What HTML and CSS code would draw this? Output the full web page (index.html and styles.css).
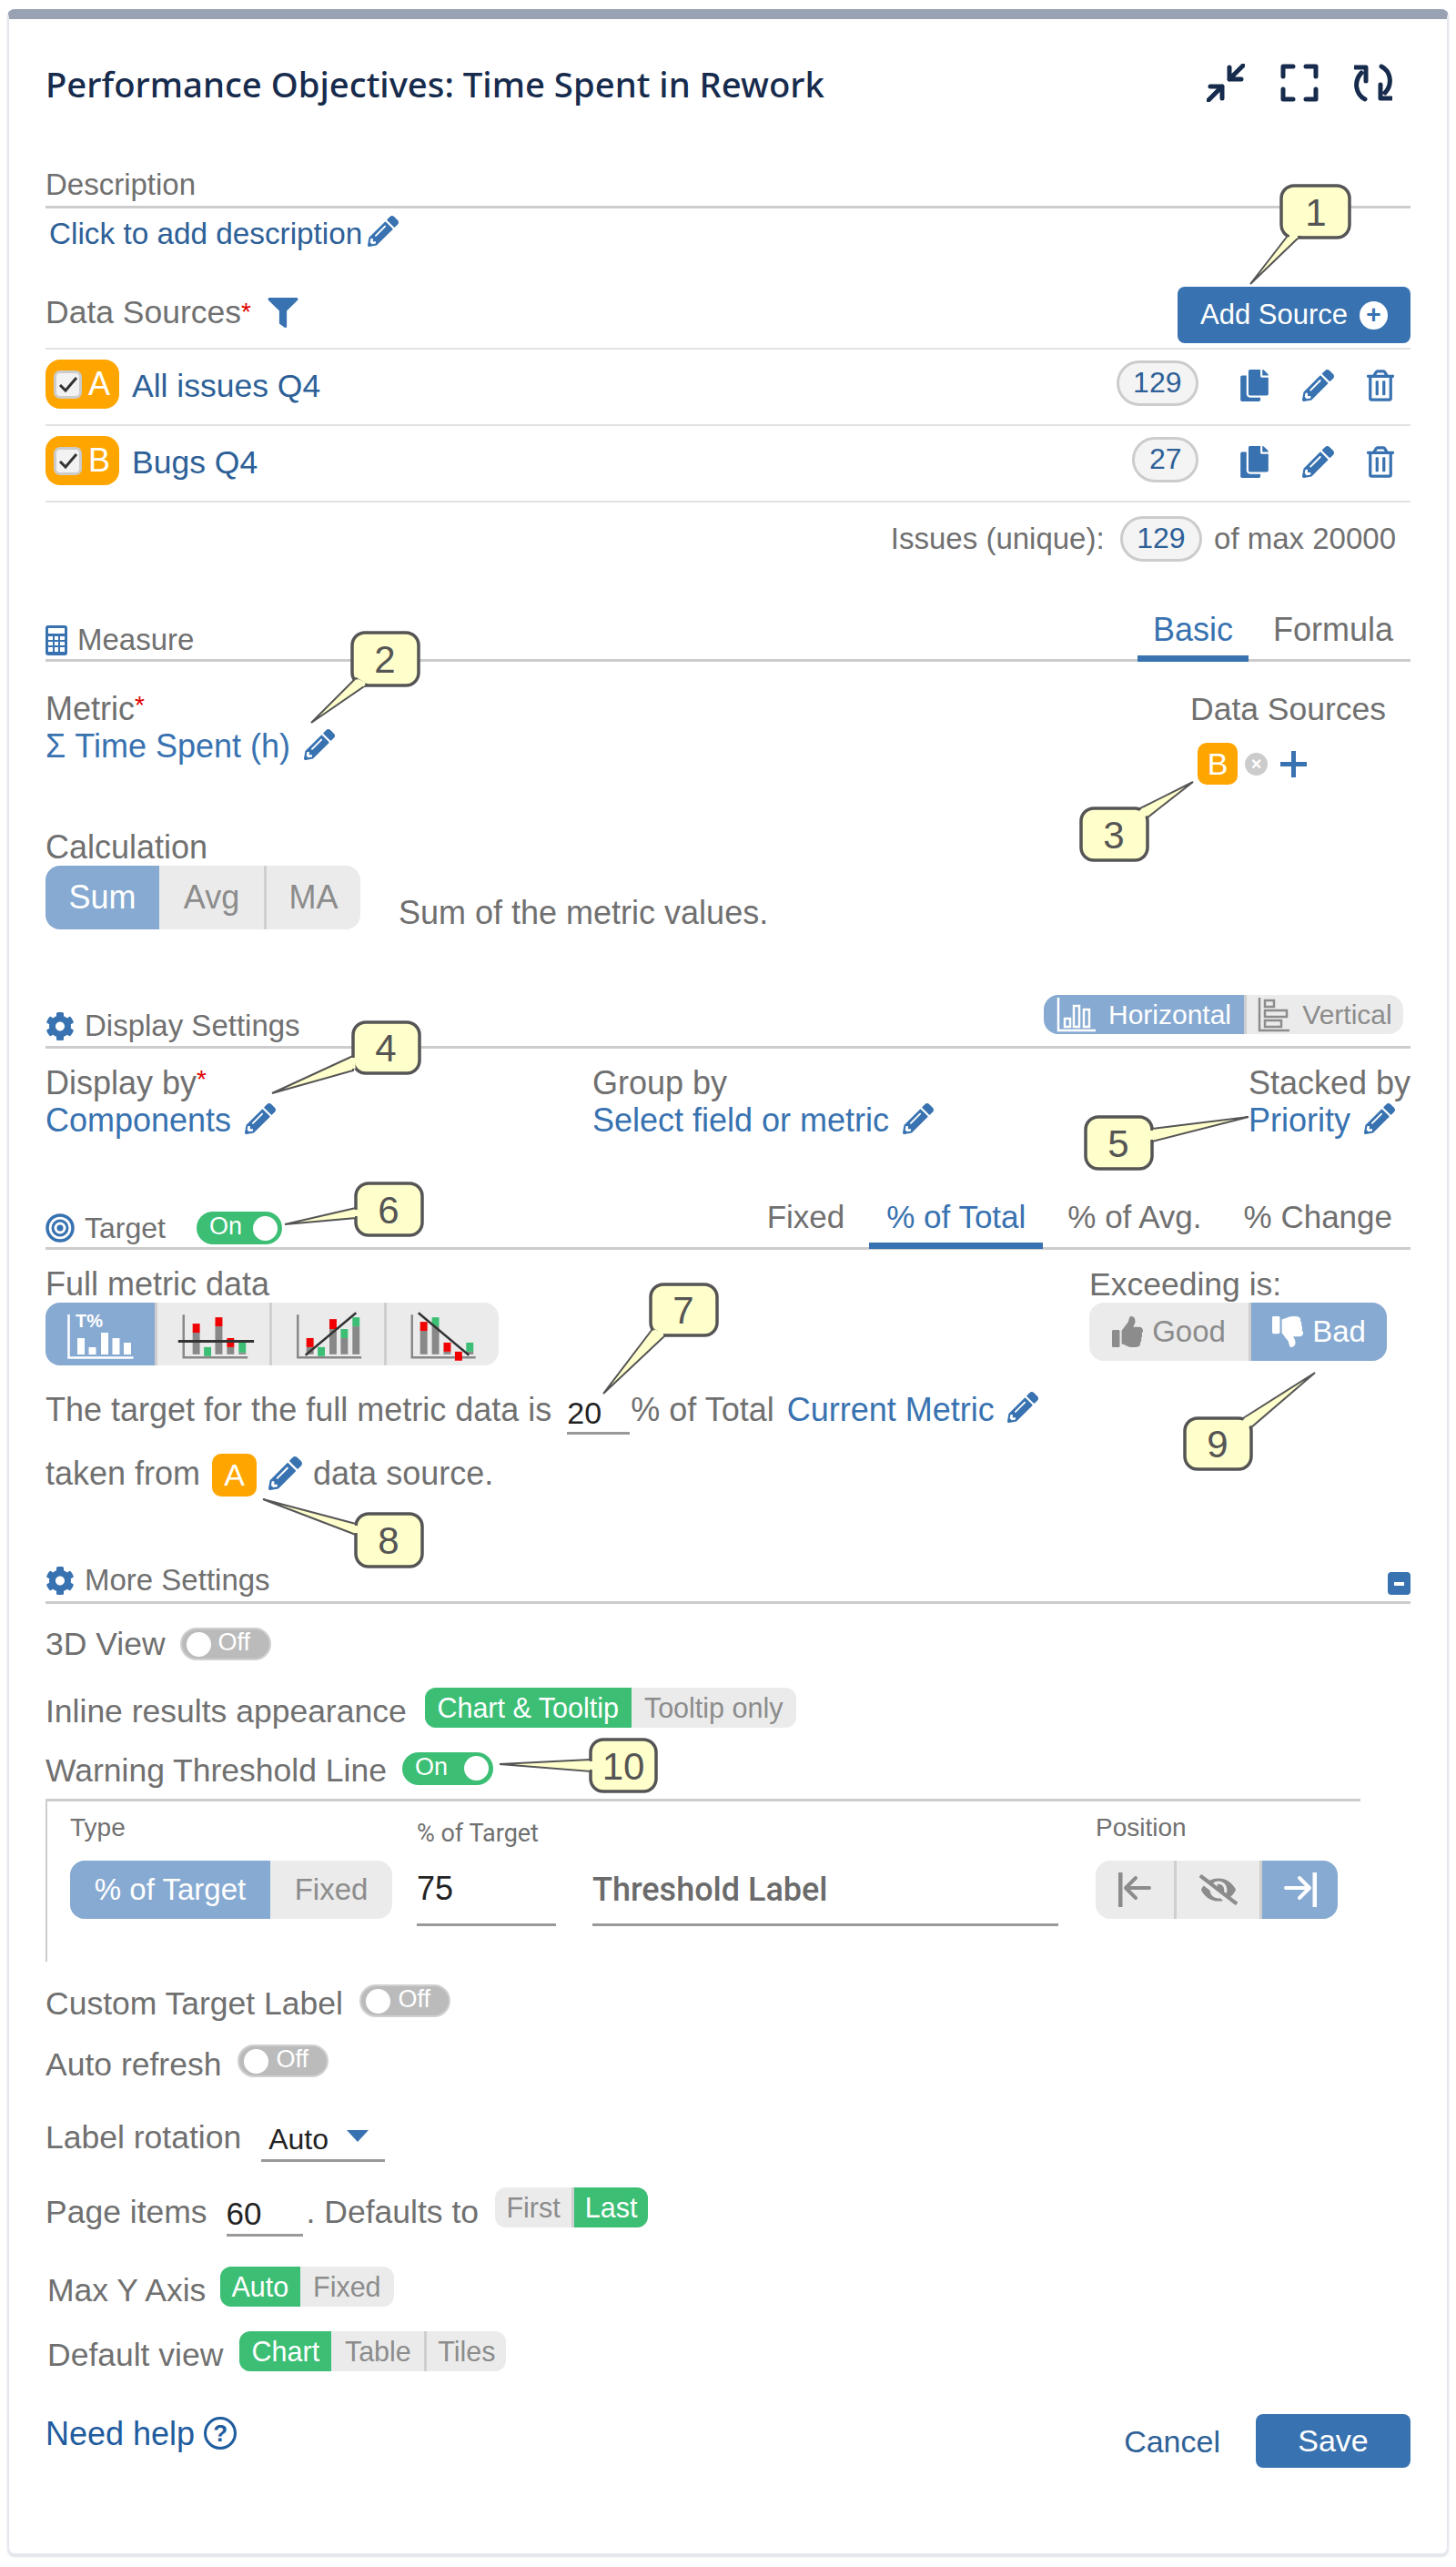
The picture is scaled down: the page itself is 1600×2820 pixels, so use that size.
FILE: index.html
```html
<!DOCTYPE html>
<html lang="en">
<head>
<meta charset="utf-8">
<title>Performance Objectives</title>
<link rel="stylesheet" href="styles.css">
</head>
<body>
<svg class="sprite" aria-hidden="true">
  <symbol id="pencil" viewBox="0 0 512 512"><path d="M497.9 142.1l-46.1 46.1c-4.7 4.7-12.3 4.7-17 0l-111-111c-4.7-4.7-4.7-12.3 0-17l46.1-46.1c18.7-18.7 49.1-18.7 67.9 0l60.1 60.1c18.8 18.7 18.8 49.1 0 67.9zM284.2 99.8L21.6 362.4.4 483.9c-2.9 16.4 11.4 30.6 27.8 27.8l121.5-21.3 262.6-262.6c4.7-4.7 4.7-12.3 0-17l-111-111c-4.8-4.7-12.4-4.7-17.1 0zM124.1 339.9c-5.5-5.5-5.5-14.3 0-19.8l154-154c5.5-5.5 14.3-5.5 19.8 0s5.5 14.3 0 19.8l-154 154c-5.5 5.5-14.3 5.5-19.8 0zM88 424h48v36.3l-64.5 11.3-31.1-31.1L51.7 376H88v48z"/></symbol>
  <symbol id="cog" viewBox="0 0 512 512"><path d="M487.4 315.7l-42.6-24.6c4.3-23.2 4.3-47 0-70.2l42.6-24.6c4.9-2.8 7.1-8.6 5.5-14-11.1-35.6-30-67.8-54.7-94.6-3.8-4.1-10-5.1-14.8-2.3L380.8 110c-17.9-15.4-38.5-27.3-60.8-35.1V25.8c0-5.6-3.9-10.5-9.4-11.7-36.7-8.2-74.3-7.8-109.2 0-5.5 1.2-9.4 6.1-9.4 11.7V75c-22.2 7.9-42.8 19.8-60.8 35.1L88.7 85.5c-4.9-2.8-11-1.9-14.8 2.3-24.7 26.7-43.6 58.9-54.7 94.6-1.7 5.4.6 11.2 5.5 14L67.3 221c-4.3 23.2-4.3 47 0 70.2l-42.6 24.6c-4.9 2.8-7.1 8.6-5.5 14 11.1 35.6 30 67.8 54.7 94.6 3.8 4.1 10 5.1 14.8 2.3l42.6-24.6c17.9 15.4 38.5 27.3 60.8 35.1v49.2c0 5.6 3.9 10.5 9.4 11.7 36.7 8.2 74.3 7.8 109.2 0 5.5-1.2 9.4-6.1 9.4-11.7v-49.2c22.2-7.9 42.8-19.8 60.8-35.1l42.6 24.6c4.9 2.8 11 1.9 14.8-2.3 24.7-26.7 43.6-58.9 54.7-94.6 1.5-5.5-.7-11.3-5.6-14.1zM256 336c-44.1 0-80-35.9-80-80s35.9-80 80-80 80 35.9 80 80-35.9 80-80 80z"/></symbol>
  <symbol id="copy" viewBox="0 0 448 512"><path d="M320 448v40c0 13.255-10.745 24-24 24H24c-13.255 0-24-10.745-24-24V120c0-13.255 10.745-24 24-24h72v296c0 30.879 25.121 56 56 56h168zm0-344V0H152c-13.255 0-24 10.745-24 24v368c0 13.255 10.745 24 24 24h272c13.255 0 24-10.745 24-24V128H344c-13.2 0-24-10.8-24-24zm120.971-31.029L375.029 7.029A24 24 0 0 0 358.059 0H352v96h96v-6.059a24 24 0 0 0-7.029-16.97z"/></symbol>
  <symbol id="trash" viewBox="0 0 448 512"><path d="M268 416h24a12 12 0 0 0 12-12V188a12 12 0 0 0-12-12h-24a12 12 0 0 0-12 12v216a12 12 0 0 0 12 12zM432 80h-82.41l-34-56.7A48 48 0 0 0 274.41 0H173.59a48 48 0 0 0-41.16 23.3L98.41 80H16A16 16 0 0 0 0 96v16a16 16 0 0 0 16 16h16v336a48 48 0 0 0 48 48h288a48 48 0 0 0 48-48V128h16a16 16 0 0 0 16-16V96a16 16 0 0 0-16-16zM171.84 50.91A6 6 0 0 1 177 48h94a6 6 0 0 1 5.15 2.91L293.61 80H154.39zM368 464H80V128h288zm-212-48h24a12 12 0 0 0 12-12V188a12 12 0 0 0-12-12h-24a12 12 0 0 0-12 12v216a12 12 0 0 0 12 12z"/></symbol>
  <symbol id="thumb" viewBox="0 0 512 512"><path d="M104 224H24c-13.255 0-24 10.745-24 24v240c0 13.255 10.745 24 24 24h80c13.255 0 24-10.745 24-24V248c0-13.255-10.745-24-24-24zM384 81.452c0 42.416-25.97 66.208-33.277 94.548h101.723c33.397 0 59.397 27.746 59.553 58.098.084 17.938-7.546 37.249-19.439 49.197l-.11.11c9.836 23.337 8.237 56.037-9.308 79.469 8.681 25.895-.069 57.704-16.382 74.757 4.298 17.598 2.244 32.575-6.148 44.632C440.202 511.587 389.616 512 346.839 512l-2.845-.001c-48.287-.017-87.806-17.598-119.56-31.725-15.957-7.099-36.821-15.887-52.651-16.178-6.54-.12-11.783-5.457-11.783-11.998v-213.77c0-3.2 1.282-6.271 3.558-8.521 39.614-39.144 56.648-80.587 89.117-113.111 14.804-14.832 20.188-37.236 25.393-58.902C282.515 39.293 291.817 0 312 0c24 0 72 8 72 81.452z"/></symbol>
  <symbol id="eyeoff" viewBox="0 0 640 512"><path d="M320 400c-75.85 0-137.25-58.71-142.9-133.11L72.2 185.82c-13.79 17.3-26.48 35.59-36.72 55.59a32.35 32.35 0 0 0 0 29.19C89.71 376.41 197.07 448 320 448c26.91 0 52.87-4 77.89-10.46L346 397.39a144.13 144.13 0 0 1-26 2.61zm313.82 58.1l-110.55-85.44a331.25 331.25 0 0 0 81.25-102.07 32.35 32.35 0 0 0 0-29.19C550.29 135.59 442.93 64 320 64a308.15 308.15 0 0 0-147.32 37.7L45.46 3.37A16 16 0 0 0 23 6.18L3.37 31.45A16 16 0 0 0 6.18 53.9l588.36 454.73a16 16 0 0 0 22.46-2.81l19.64-25.27a16 16 0 0 0-2.82-22.45zm-183.72-142l-39.3-30.38A94.75 94.75 0 0 0 416 256a94.76 94.76 0 0 0-121.31-92.21A47.65 47.65 0 0 1 304 192a46.64 46.64 0 0 1-1.54 10l-73.61-56.89A142.31 142.31 0 0 1 320 112a143.92 143.92 0 0 1 144 144c0 21.63-5.29 41.79-13.9 60.11z"/></symbol>
</svg>

<div class="page">
  <main class="card">
    <header class="head">
      <h1 class="title">Performance Objectives: Time Spent in Rework</h1>
      <div class="head-icons">
        <svg class="hi" width="42" height="42" viewBox="0 0 42 42"><path d="M40 2L25 17M25 4V17H38M2 40L17 25M4 25H17V38"/></svg>
        <svg class="hi" width="42" height="42" viewBox="0 0 42 42"><path d="M3 14V3H14M28 3H39V14M39 28V39H28M14 39H3V28"/></svg>
        <svg class="hi" width="42" height="42" viewBox="0 0 42 42"><path d="M30 3C40 8 43 22 34 32M29 23V38H41M12 39C2 34-1 20 8 10M13 19V4H1"/></svg>
      </div>
    </header>

    <div class="sec-head sec-desc"><span class="sec-title">Description</span></div>
    <div class="add-desc">Click to add description <svg class="ic pencil"><use href="#pencil"/></svg></div>

    <div class="ds-row">
      <div class="ds-label">Data Sources<span class="req">*</span>
        <svg class="ic filter" viewBox="0 0 512 512"><path d="M487.976 0H24.028C2.71 0-8.047 25.866 7.058 40.971L192 225.941V432c0 7.831 3.821 15.17 10.237 19.662l80 55.98C298.02 518.69 320 507.493 320 487.98V225.941l184.947-184.97C520.021 25.896 509.338 0 487.976 0z"/></svg>
      </div>
      <button class="btn add-btn">Add Source <span class="plus-circle">+</span></button>
    </div>

    <ul class="sources">
      <li class="source">
        <span class="chip-check"><span class="check"><svg width="24" height="22" viewBox="0 0 24 22"><path d="M3 12l6 6L21 4"/></svg></span>A</span>
        <span class="source-name">All issues Q4</span>
        <span class="count">129</span>
        <span class="actions">
          <svg class="ic act-copy"><use href="#copy"/></svg>
          <svg class="ic act-pencil"><use href="#pencil"/></svg>
          <svg class="ic act-trash"><use href="#trash"/></svg>
        </span>
      </li>
      <li class="source">
        <span class="chip-check"><span class="check"><svg width="24" height="22" viewBox="0 0 24 22"><path d="M3 12l6 6L21 4"/></svg></span>B</span>
        <span class="source-name">Bugs Q4</span>
        <span class="count">27</span>
        <span class="actions">
          <svg class="ic act-copy"><use href="#copy"/></svg>
          <svg class="ic act-pencil"><use href="#pencil"/></svg>
          <svg class="ic act-trash"><use href="#trash"/></svg>
        </span>
      </li>
    </ul>
    <div class="issues"><span class="issues-lbl">Issues (unique):</span><span class="count">129</span><span>of max 20000</span></div>

    <div class="sec-head sec-measure">
      <span class="sec-title sec-offset">
        <svg class="calc" viewBox="0 0 24 33"><rect width="24" height="33" rx="3" class="calc-bg"/><rect x="3" y="3" width="18" height="6" class="calc-key"/><rect x="3" y="12" width="5" height="4" class="calc-key"/><rect x="10" y="12" width="4" height="4" class="calc-key"/><rect x="16" y="12" width="5" height="4" class="calc-key"/><rect x="3" y="18" width="5" height="4" class="calc-key"/><rect x="10" y="18" width="4" height="4" class="calc-key"/><rect x="16" y="18" width="5" height="4" class="calc-key"/><rect x="3" y="24" width="5" height="5" class="calc-key"/><rect x="10" y="24" width="4" height="5" class="calc-key"/><rect x="16" y="24" width="5" height="5" class="calc-key"/></svg>
        Measure</span>
      <div class="tabs tabs-measure">
        <span class="tab active">Basic</span>
        <span class="tab">Formula</span>
      </div>
    </div>

    <div class="metric-row">
      <div>
        <div class="lbl">Metric<span class="req">*</span></div>
        <div class="val">Σ Time Spent (h) <svg class="ic pencil pen-gap"><use href="#pencil"/></svg></div>
      </div>
      <div class="metric-ds">
        <div class="lbl">Data Sources</div>
        <div class="metric-chips">
          <span class="chip">B</span>
          <span class="x-dot">×</span>
          <svg class="plus" width="29" height="29" viewBox="0 0 29 29"><path d="M14.500 0V29M0 14.500H29"/></svg>
        </div>
      </div>
    </div>

    <div class="lbl calc-lbl">Calculation</div>
    <div class="calc-row">
      <div class="seg seg-lg">
        <span class="cell on">Sum</span><span class="cell">Avg</span><span class="cell">MA</span>
      </div>
      <span class="calc-note">Sum of the metric values.</span>
    </div>

    <div class="sec-head sec-display">
      <span class="sec-title sec-gear"><svg class="ic gear"><use href="#cog"/></svg> Display Settings</span>
      <div class="seg seg-orient">
        <span class="cell on">
          <svg width="44" height="40" viewBox="0 0 44 40" class="svg-white"><path d="M2 1V37H43M9 24h6v9H9zM19 10h6v23h-6zM30 14h6v19h-6z"/></svg>
          Horizontal</span>
        <span class="cell">
          <svg width="36" height="40" viewBox="0 0 36 40" class="svg-grey"><path d="M2 1V37H35M8 4h10v7H8zM8 15h24v7H8zM8 26h18v7H8z"/></svg>
          Vertical</span>
      </div>
    </div>

    <div class="display-grid">
      <div><div class="lbl">Display by<span class="req">*</span></div><div class="val">Components <svg class="ic pencil pen-gap"><use href="#pencil"/></svg></div></div>
      <div><div class="lbl">Group by</div><div class="val">Select field or metric <svg class="ic pencil pen-gap"><use href="#pencil"/></svg></div></div>
      <div><div class="lbl">Stacked by</div><div class="val">Priority <svg class="ic pencil pen-gap"><use href="#pencil"/></svg></div></div>
    </div>

    <div class="sec-head sec-target">
      <span class="sec-title sec-target-title">
        <svg class="target-ic" viewBox="0 0 32 32"><circle cx="16" cy="16" r="14" class="ring"/><circle cx="16" cy="16" r="8" class="ring ring-thin"/><circle cx="16" cy="16" r="3.500" class="dot"/></svg>
        Target
        <span class="toggle on"><span class="t-text">On</span><span class="knob"></span></span>
      </span>
      <div class="tabs tabs-target">
        <span class="tab">Fixed</span>
        <span class="tab active">% of Total</span>
        <span class="tab">% of Avg.</span>
        <span class="tab">% Change</span>
      </div>
    </div>

    <div class="fm-row">
      <div>
        <div class="lbl">Full metric data</div>
        <div class="seg seg-chart">
          <span class="cell on">
            <svg width="120" height="69" viewBox="0 0 120 69"><path d="M25.500 13V60.500H96.500" class="ax-w"/><rect x="35" y="39" width="8" height="18" class="w"/><rect x="47.500" y="49" width="8" height="8" class="w"/><rect x="61" y="33" width="8" height="24" class="w"/><rect x="73.500" y="39" width="8" height="18" class="w"/><rect x="86" y="44" width="8" height="13" class="w"/><text x="33" y="27" class="t-pct">T%</text></svg>
          </span>
          <span class="cell">
            <svg width="124" height="69" viewBox="0 0 124 69"><path d="M29 13V60.500H100" class="ax"/><rect x="39" y="33" width="8" height="24" class="g"/><rect x="39" y="23" width="8" height="10" class="r"/><rect x="51.500" y="49" width="8" height="10" class="gr"/><rect x="64" y="26" width="8" height="31" class="g"/><rect x="64" y="16" width="8" height="10" class="r"/><rect x="77" y="49" width="8" height="8" class="g"/><rect x="77" y="39" width="8" height="10" class="r"/><rect x="90" y="55" width="8" height="2" class="g"/><rect x="90" y="44" width="8" height="11" class="gr"/><path d="M23 42.500H107" class="ln"/></svg>
          </span>
          <span class="cell">
            <svg width="124" height="69" viewBox="0 0 124 69"><path d="M28.500 13V60.500H99" class="ax"/><rect x="38" y="49" width="8" height="8" class="g"/><rect x="38" y="39" width="8" height="10" class="r"/><rect x="50.500" y="49" width="8" height="10" class="gr"/><rect x="63.500" y="29" width="8" height="28" class="g"/><rect x="63.500" y="18" width="8" height="11" class="r"/><rect x="76" y="39" width="8" height="18" class="g"/><rect x="76" y="29" width="8" height="10" class="gr"/><rect x="89" y="26" width="8" height="31" class="g"/><rect x="89" y="16" width="8" height="10" class="gr"/><path d="M37 58L93 11" class="ln ln-thin"/></svg>
          </span>
          <span class="cell">
            <svg width="124" height="69" viewBox="0 0 124 69"><path d="M28 13V60.500H98.500" class="ax"/><rect x="37" y="31" width="8" height="26" class="g"/><rect x="37" y="21" width="8" height="10" class="r"/><rect x="50" y="26" width="8" height="31" class="g"/><rect x="50" y="16" width="8" height="10" class="gr"/><rect x="63" y="54" width="8" height="3" class="g"/><rect x="63" y="44" width="8" height="10" class="r"/><rect x="75.500" y="54" width="8" height="10" class="r"/><rect x="88" y="54" width="8" height="3" class="g"/><rect x="88" y="44" width="8" height="10" class="gr"/><path d="M35 11L91 58" class="ln ln-thin"/></svg>
          </span>
        </div>
      </div>
      <div class="exceed">
        <div class="lbl">Exceeding is:</div>
        <div class="seg seg-exceed">
          <span class="cell"><svg class="ic thumb"><use href="#thumb"/></svg> Good</span>
          <span class="cell on"><svg class="ic thumb thumb-down"><use href="#thumb"/></svg> Bad</span>
        </div>
      </div>
    </div>

    <div class="sentence sentence-1">
      <span>The target for the full metric data is</span>
      <span class="field field-20">20</span>
      <span>% of Total</span>
      <span class="link link-metric">Current Metric</span>
      <svg class="ic pencil pen-metric"><use href="#pencil"/></svg>
    </div>
    <div class="sentence sentence-2">
      <span class="s2-text">taken from</span>
      <span class="chip chip-a">A</span>
      <svg class="ic pencil pen-a"><use href="#pencil"/></svg>
      <span class="s2-text">data source.</span>
    </div>

    <div class="sec-head sec-more">
      <span class="sec-title sec-gear-more"><svg class="ic gear"><use href="#cog"/></svg> More Settings</span>
      <span class="minus"><span class="minus-bar"></span></span>
    </div>

    <div class="opt opt-3d"><span class="opt-label">3D View</span><span class="toggle off"><span class="knob"></span><span class="t-text">Off</span></span></div>
    <div class="opt opt-inline"><span class="opt-label low">Inline results appearance</span>
      <div class="seg seg-sm seg-inline"><span class="cell ok">Chart &amp; Tooltip</span><span class="cell">Tooltip only</span></div>
    </div>
    <div class="opt opt-warn"><span class="opt-label low-s">Warning Threshold Line</span><span class="toggle on"><span class="t-text">On</span><span class="knob"></span></span></div>

    <section class="thresh">
      <div class="t-col t-type">
        <div class="t-label">Type</div>
        <div class="seg seg-type"><span class="cell on">% of Target</span><span class="cell">Fixed</span></div>
      </div>
      <div class="t-col t-pct-col">
        <div class="t-label t-label-rb">% of Target</div>
        <div class="t-input t-input-num">75</div>
      </div>
      <div class="t-col t-text-col">
        <div class="t-label"></div>
        <div class="t-input t-input-text">Threshold Label</div>
      </div>
      <div class="t-col t-pos">
        <div class="t-label">Position</div>
        <div class="seg seg-pos">
          <span class="cell"><svg width="36" height="38" viewBox="0 0 36 38" class="pos-g"><path d="M2 0V38" class="pos-bar"/><path d="M34 17H8M19 6L8 17L19 28"/></svg></span>
          <span class="cell"><svg class="ic eye"><use href="#eyeoff"/></svg></span>
          <span class="cell on"><svg width="36" height="38" viewBox="0 0 36 38" class="pos-w"><path d="M34 0V38" class="pos-bar"/><path d="M2 17H28M17 6L28 17L17 28"/></svg></span>
        </div>
      </div>
    </section>

    <div class="opt opt-custom"><span class="opt-label low-s">Custom Target Label</span><span class="toggle off"><span class="knob"></span><span class="t-text">Off</span></span></div>
    <div class="opt opt-auto"><span class="opt-label low">Auto refresh</span><span class="toggle off"><span class="knob"></span><span class="t-text">Off</span></span></div>

    <div class="inline-row rot-row">
      <span>Label rotation</span>
      <span class="select"><span class="select-val">Auto</span><span class="caret"></span></span>
    </div>
    <div class="inline-row page-row">
      <span class="ptext">Page items</span>
      <span class="field field-60">60</span>
      <span class="ptext ptext-def">. Defaults to</span>
      <div class="seg seg-sm seg-def"><span class="cell">First</span><span class="cell ok">Last</span></div>
    </div>
    <div class="opt opt-max"><span class="opt-label low ind">Max Y Axis</span>
      <div class="seg seg-sm seg-max"><span class="cell ok">Auto</span><span class="cell">Fixed</span></div>
    </div>
    <div class="opt opt-view"><span class="opt-label low ind">Default view</span>
      <div class="seg seg-sm seg-view"><span class="cell ok">Chart</span><span class="cell">Table</span><span class="cell">Tiles</span></div>
    </div>

    <footer class="foot">
      <span class="help">Need help <span class="help-q">?</span></span>
      <span class="foot-right">
        <span class="cancel">Cancel</span>
        <button class="btn save">Save</button>
      </span>
    </footer>
  </main>

  <svg class="callouts" viewBox="0 0 1600 2820">
    <g><rect x="1408" y="204" width="75" height="57" rx="14"/><polygon points="1415,259 1374,312 1428,260"/><line x1="1417" y1="259" x2="1426" y2="259"/><text x="1446" y="248">1</text></g>
    <g><rect x="387" y="695" width="73" height="58" rx="14"/><polygon points="391,745 342,794 403,752"/><line x1="392" y1="748" x2="401" y2="752"/><text x="423" y="739">2</text></g>
    <g><rect x="1188" y="888" width="73" height="57" rx="14"/><polygon points="1253,888 1311,859 1261,898"/><line x1="1254" y1="889" x2="1260" y2="896"/><text x="1224" y="932">3</text></g>
    <g><rect x="388" y="1123" width="73" height="56" rx="14"/><polygon points="388,1160 299,1201 388,1176"/><line x1="388" y1="1162" x2="388" y2="1174"/><text x="424" y="1166">4</text></g>
    <g><rect x="1193" y="1227" width="73" height="57" rx="14"/><polygon points="1266,1240 1372,1227 1266,1254"/><line x1="1266" y1="1242" x2="1266" y2="1252"/><text x="1229" y="1271">5</text></g>
    <g><rect x="391" y="1300" width="73" height="57" rx="14"/><polygon points="391,1327 313,1345 391,1338"/><line x1="391" y1="1329" x2="391" y2="1336"/><text x="427" y="1344">6</text></g>
    <g><rect x="715" y="1411" width="73" height="56" rx="14"/><polygon points="717,1460 663,1531 731,1467"/><line x1="718" y1="1463" x2="729" y2="1466"/><text x="751" y="1454">7</text></g>
    <g><rect x="391" y="1663" width="73" height="58" rx="14"/><polygon points="391,1674 289,1647 391,1686"/><line x1="391" y1="1676" x2="391" y2="1684"/><text x="427" y="1707">8</text></g>
    <g><rect x="1302" y="1558" width="73" height="56" rx="14"/><polygon points="1366,1558 1445,1508 1375,1568"/><line x1="1367" y1="1559" x2="1374" y2="1566"/><text x="1338" y="1601">9</text></g>
    <g><rect x="649" y="1911" width="72" height="57" rx="14"/><polygon points="649,1933 549,1938 649,1946"/><line x1="649" y1="1935" x2="649" y2="1944"/><text x="685" y="1955">10</text></g>
  </svg>
</div>
</body>
</html>
```
FILE: styles.css
```css
* { box-sizing: border-box; }
html, body { margin: 0; padding: 0; background: #fff; }
body { font-family: "Liberation Sans", Arial, sans-serif; font-size: 36px; color: #707070; line-height: 40px; }
ul { list-style: none; margin: 0; padding: 0; }
button { font-family: inherit; border: 0; cursor: pointer; }
.sprite { position: absolute; width: 0; height: 0; overflow: hidden; }
.page { position: relative; width: 1600px; height: 2820px; overflow: hidden; padding-top: 10px; }
.card { margin-left: 8px; width: 1584px; height: 2797px; background: #fff; border: 2px solid #e5e7ee; border-top: 11px solid #98a2b3; border-radius: 8px; padding: 0 40px; box-shadow: 0 2px 2px rgba(90,100,130,.18); }
.ic { fill: currentColor; display: inline-block; }
.req { color: #e00000; font-size: 28px; vertical-align: 7px; line-height: 0; }

.head { margin-top: 40px; height: 62px; display: flex; justify-content: space-between; align-items: center; }
.title { margin: 0; font-family: "Noto Sans", sans-serif; font-weight: 500; font-size: 38.300px; line-height: 62px; color: #172b4d; white-space: nowrap; }
.head-icons { display: flex; gap: 39px; margin-right: 20px; margin-top: -2px; }
.hi { fill: none; stroke: #172b4d; stroke-width: 5; stroke-linecap: round; stroke-linejoin: round; }

.sec-head { border-bottom: 3px solid #ccc; display: flex; justify-content: space-between; align-items: flex-start; }
.sec-title { font-size: 33px; line-height: 40px; display: flex; align-items: center; }
.sec-desc { margin-top: 60px; height: 46px; }
.add-desc { margin-top: 8px; height: 40px; padding-left: 4px; color: #2d6097; font-size: 33.300px; display: flex; align-items: center; gap: 6px; }
.pencil { width: 34px; height: 34px; color: #3872b0; }
.add-desc .pencil { margin-top: -6px; }

.ds-row { margin-top: 38px; height: 62px; display: flex; justify-content: space-between; align-items: flex-start; }
.ds-label { display: flex; align-items: center; margin-top: 8px; height: 40px; font-size: 35.500px; }
.filter { width: 36px; height: 33px; color: #3872b0; margin-left: 17px; }
.btn { background: #3872b0; color: #fff; border-radius: 8px; }
.add-btn { width: 256px; height: 62px; font-size: 31px; display: flex; align-items: center; justify-content: center; gap: 13px; }
.plus-circle { width: 31px; height: 31px; border-radius: 50%; background: #fff; color: #3872b0; font-size: 28px; line-height: 30px; font-weight: 700; text-align: center; }

.sources { margin-top: 5px; border-top: 2px solid #e2e2e2; }
.source { height: 84px; border-bottom: 2px solid #e2e2e2; display: flex; align-items: center; padding-bottom: 6px; }
.chip-check { width: 81px; height: 54px; background: #ffa500; border-radius: 16px; color: #fff; display: flex; align-items: center; padding-left: 9px; gap: 7px; font-size: 36px; }
.check { width: 31px; height: 31px; background: #f2f2f2; border: 3px solid #ccc; border-radius: 7px; display: flex; align-items: center; justify-content: center; }
.check svg { fill: none; stroke: #333; stroke-width: 3; flex: none; }
.source-name { margin-left: 14px; color: #2d6097; flex: 1; margin-top: 4px; font-size: 35.500px; }
.count { display: inline-block; height: 50px; padding: 0 15.500px; border: 3px solid #ccc; border-radius: 25px; background: #f4f4f4; color: #2d6097; font-size: 32px; line-height: 43px; }
.source .count { margin-top: -3px; }
.actions { margin-left: 44px; margin-right: 18px; display: flex; align-items: center; gap: 35px; margin-top: 2px; }
.act-copy { width: 35px; height: 35px; color: #3872b0; }
.act-pencil { width: 35px; height: 35px; color: #3872b0; }
.act-trash { width: 30px; height: 35px; color: #3872b0; margin-left: 1px; }
.issues { margin-top: 15px; height: 50px; display: flex; align-items: center; justify-content: flex-end; gap: 13px; padding-right: 16px; font-size: 33px; }
.issues-lbl { margin-right: 4px; }

.sec-measure { margin-top: 54px; height: 56px; }
.sec-offset { margin-top: 12px; gap: 11px; }
.calc { width: 24px; height: 33px; }
.calc-bg { fill: #3872b0; }
.calc-key { fill: #fff; }
.tabs { display: flex; }
.tab { display: block; margin-bottom: -3px; padding-top: 1px; border-bottom: 7px solid transparent; height: 56px; }
.tab.active { color: #3872b0; border-bottom-color: #3872b0; }
.tabs-measure { gap: 10px; margin-right: 2px; }
.tabs-measure .tab { padding-left: 17px; padding-right: 17px; }
.tabs-target { gap: 8px; margin-right: 1px; font-size: 35px; }
.tabs-target .tab { padding-left: 19px; padding-right: 19px; }

.lbl { height: 40px; font-size: 36px; white-space: nowrap; }
.metric-row .lbl, .display-grid .lbl { line-height: 38px; }
.val { height: 40px; color: #3872b0; font-size: 36px; display: flex; align-items: center; white-space: nowrap; }
.pen-gap { margin-left: 15px; margin-top: -4px; }
.metric-row { margin-top: 33px; height: 102px; display: flex; justify-content: space-between; }
.metric-ds { width: 242px; font-size: 35.500px; }
.metric-ds .lbl { font-size: 35.500px; }
.metric-chips { margin-top: 16px; margin-left: 8px; display: flex; align-items: center; }
.chip { display: inline-block; width: 44px; height: 46px; border-radius: 10px; background: #ffa500; color: #fff; text-align: center; line-height: 46px; font-size: 34px; flex: none; }
.x-dot { width: 25px; height: 25px; margin-left: 8px; border-radius: 50%; background: #ccc; color: #fff; font-size: 20px; line-height: 24px; text-align: center; font-weight: 700; }
.plus { margin-left: 14px; fill: none; stroke: #3872b0; stroke-width: 5; }

.calc-lbl { margin-top: 49px; }
.calc-row { display: flex; align-items: flex-start; height: 70px; }
.seg { display: flex; border-radius: 16px; overflow: hidden; background: #ebebeb; color: #8c8c8c; }
.cell { display: flex; align-items: center; justify-content: center; white-space: nowrap; }
.cell + .cell { border-left: 3px solid #cfcfcf; }
.cell.on { background: #87aad2; color: #fff; }
.cell.ok { background: #3cbf75; color: #fff; }
.cell.on + .cell, .cell.ok + .cell { border-left: 0; }
.seg-lg { height: 70px; width: 346px; }
.seg-lg .cell:nth-child(1) { width: 125px; }
.seg-lg .cell:nth-child(2) { width: 115px; }
.seg-lg .cell:nth-child(3) { width: 106px; }
.calc-note { margin-left: 42px; margin-top: 32px; }

.sec-display { margin-top: 72px; height: 59px; }
.sec-gear { margin-top: 14px; gap: 11px; }
.sec-gear-more { gap: 11px; margin-top: -2px; }
.gear { width: 32px; height: 33px; color: #3872b0; }
.seg-orient { height: 43px; width: 395px; margin-right: 8px; font-size: 30px; }
.seg-orient .cell:nth-child(1) { width: 223px; gap: 13px; border-right: 3px solid #cfcfcf; }
.seg-orient .cell:nth-child(2) { flex: 1; gap: 13px; }
.svg-white, .svg-grey { fill: none; stroke-width: 2.500; flex: none; }
.svg-white { stroke: #fff; }
.svg-grey { stroke: #8c8c8c; }

.display-grid { margin-top: 19px; display: grid; grid-template-columns: 601px 721px auto; height: 80px; }

.sec-target { margin-top: 65px; height: 57px; }
.sec-target-title { margin-top: 13px; gap: 11px; height: 40px; font-size: 32px; }
.target-ic { width: 32px; height: 32px; }
.ring { fill: none; stroke: #3872b0; stroke-width: 3.500; }
.ring-thin { stroke-width: 3; }
.dot { fill: #3872b0; }
.toggle { display: inline-flex; align-items: center; height: 36px; width: 100px; border-radius: 18px; color: #fff; font-size: 27px; flex: none; padding: 0 5px; gap: 8px; }
.toggle.on { background: #3cbf75; justify-content: space-between; padding-left: 14px; }
.toggle.off { background: #bbb; border: 2px solid #d0d0d0; }
.knob { width: 27px; height: 27px; border-radius: 50%; background: #fff; flex: none; }
.t-text { line-height: 30px; margin-top: -4px; }
.sec-target .toggle { width: 94px; margin-left: 23px; }

.fm-row { margin-top: 18px; height: 109px; display: flex; justify-content: space-between; }
.seg-chart { width: 498px; height: 69px; }
.seg-chart .cell { width: 126px; }
.seg-chart .cell.on { width: 122px; }
.seg-chart .cell:nth-child(2) { border-left: 3px solid #cfcfcf; }
.exceed { margin-right: 26px; }
.exceed .lbl { font-size: 35.500px; }
.seg-exceed { width: 327px; height: 64px; font-size: 33px; }
.seg-exceed .cell:nth-child(1) { width: 175px; gap: 10px; }
.seg-exceed .cell:nth-child(2) { flex: 1; gap: 10px; }
.thumb { width: 34px; height: 34px; }
.thumb-down { transform: scaleY(-1); }
.ax { fill: none; stroke: #888; stroke-width: 2.500; }
.ax-w { fill: none; stroke: #fff; stroke-width: 2.500; }
.w { fill: #fff; }
.g { fill: #888; }
.r { fill: #f00000; }
.gr { fill: #3cbf75; }
.ln { stroke: #333; stroke-width: 3; fill: none; }
.ln-thin { stroke-width: 2.500; }
.t-pct { fill: #fff; font-family: "Liberation Sans", sans-serif; font-weight: 700; font-size: 20px; }

.sentence { display: flex; align-items: flex-start; white-space: nowrap; }
.sentence-1 { margin-top: 29px; height: 48px; }
.field { color: #222; border-bottom: 3px solid #999; }
.field-20 { width: 69px; height: 44px; margin: 3px 1px 0 17px; font-size: 34px; }
.link-metric { color: #3872b0; margin-left: 14px; }
.pen-metric { margin-left: 14px; }
.sentence-2 { margin-top: 20px; height: 47px; align-items: center; }
.s2-text { margin-top: -3px; }
.chip-a { width: 49px; height: 47px; margin-left: 13px; }
.pen-a { width: 37px; height: 37px; margin: -4px 12px 0 13px; }

.sec-more { margin-top: 74px; height: 44px; }
.minus { width: 25px; height: 25px; margin-top: 9px; border-radius: 4px; background: #3872b0; display: flex; align-items: center; justify-content: center; }
.minus-bar { width: 11px; height: 4px; background: #fff; }

.opt { display: flex; align-items: center; white-space: nowrap; font-size: 35.500px; }
.opt-label { margin-right: 16px; }
.low { padding-top: 8px; }
.low-s { padding-top: 5px; }
.ind { margin-left: 2px; }
.opt-3d { margin-top: 24px; height: 40px; }
.opt-inline { margin-top: 28px; height: 44px; }
.opt-inline .opt-label { margin-right: 20px; }
.opt-warn { margin-top: 27px; height: 35px; }
.opt-warn .opt-label { margin-right: 17px; }
.seg-sm { height: 44px; font-size: 30.500px; border-radius: 12px; }
.seg-inline { width: 408px; }
.seg-inline .cell:nth-child(1) { width: 227px; }
.seg-inline .cell:nth-child(2) { flex: 1; }
.seg-def { width: 168px; }
.seg-def .cell { width: 84px; }
.seg-max { width: 191px; }
.seg-max .cell:nth-child(1) { width: 88px; }
.seg-max .cell:nth-child(2) { flex: 1; }
.seg-view { width: 293px; }
.seg-view .cell:nth-child(1) { width: 101px; }
.seg-view .cell:nth-child(2) { width: 102px; }
.seg-view .cell:nth-child(3) { flex: 1; }

.thresh { margin-top: 16px; width: 1445px; height: 179px; border-top: 3px solid #ccc; border-left: 2px solid #ccc; padding: 11px 0 0 25px; display: flex; }
.t-col { display: flex; flex-direction: column; }
.t-label { height: 54px; font-size: 28px; line-height: 36px; }
.t-label-rb { font-family: Roboto, sans-serif; font-size: 27px; line-height: 48px; }
.t-type { width: 381px; }
.seg-type { width: 354px; height: 64px; font-size: 33px; }
.seg-type .cell:nth-child(1) { width: 220px; }
.seg-type .cell:nth-child(2) { flex: 1; }
.t-pct-col { width: 193px; }
.t-input { height: 72px; border-bottom: 3px solid #999; padding-top: 11px; }
.t-input-num { width: 153px; color: #222; font-size: 36px; }
.t-text-col { width: 553px; }
.t-input-text { width: 512px; font-family: Roboto, sans-serif; font-weight: 500; font-size: 36px; color: #6b6b6b; padding-top: 12px; }
.seg-pos { width: 266px; height: 64px; }
.seg-pos .cell:nth-child(1) { width: 86px; }
.seg-pos .cell:nth-child(2) { width: 94px; }
.seg-pos .cell:nth-child(3) { flex: 1; }
.pos-g, .pos-w { fill: none; stroke-width: 4; stroke-linecap: round; stroke-linejoin: round; }
.pos-g { stroke: #8c8c8c; }
.pos-w { stroke: #fff; }
.pos-bar { stroke-width: 5; stroke-linecap: butt; }
.eye { width: 42px; height: 34px; color: #8c8c8c; }

.opt-custom { margin-top: 25px; height: 36px; }
.opt-custom .opt-label { margin-right: 18.500px; }
.opt-auto { margin-top: 30px; height: 36px; }
.opt-auto .opt-label { margin-right: 18px; }

.inline-row { display: flex; align-items: flex-start; white-space: nowrap; font-size: 35.500px; }
.rot-row { margin-top: 46px; height: 47px; }
.select { display: flex; width: 136px; height: 47px; margin-left: 22px; padding-left: 8px; color: #222; font-size: 32px; border-bottom: 3px solid #999; }
.select-val { padding-top: 2px; }
.caret { width: 0; height: 0; margin: 12px 0 0 20px; border-left: 12px solid transparent; border-right: 12px solid transparent; border-top: 13px solid #3872b0; }
.page-row { margin-top: 28px; height: 54px; }
.ptext { margin-top: 7px; }
.ptext-def { margin-left: 4px; }
.field-60 { width: 84px; height: 47px; margin: 7px 0 0 21px; padding-top: 2px; font-size: 35px; }
.seg-def { margin-left: 18px; }
.opt-max { margin-top: 33px; height: 44px; }
.opt-max .opt-label { margin-right: 15.500px; }
.opt-view { margin-top: 27px; height: 44px; }
.opt-view .opt-label { margin-right: 18px; }

.foot { margin-top: 47px; height: 59px; display: flex; justify-content: space-between; align-items: flex-start; }
.help { color: #1f5c9e; display: flex; align-items: center; gap: 10px; height: 40px; margin-top: 2px; }
.help-q { width: 36px; height: 36px; margin-top: -2px; border: 3px solid #1f5c9e; border-radius: 50%; font-size: 26px; line-height: 30px; text-align: center; font-weight: 700; }
.foot-right { display: flex; align-items: center; gap: 39px; }
.cancel { color: #2d6097; font-size: 34px; }
.save { width: 170px; height: 59px; font-size: 34px; }

.callouts { position: absolute; left: 0; top: 0; width: 1600px; height: 2820px; pointer-events: none; font-family: "Liberation Sans", sans-serif; }
.callouts rect { fill: #ffc; stroke: #555; stroke-width: 3.500; }
.callouts polygon { fill: #ffc; stroke: #555; stroke-width: 2; stroke-linejoin: miter; }
.callouts line { stroke: #ffc; stroke-width: 5; }
.callouts text { fill: #555; font-size: 42px; text-anchor: middle; }
```
